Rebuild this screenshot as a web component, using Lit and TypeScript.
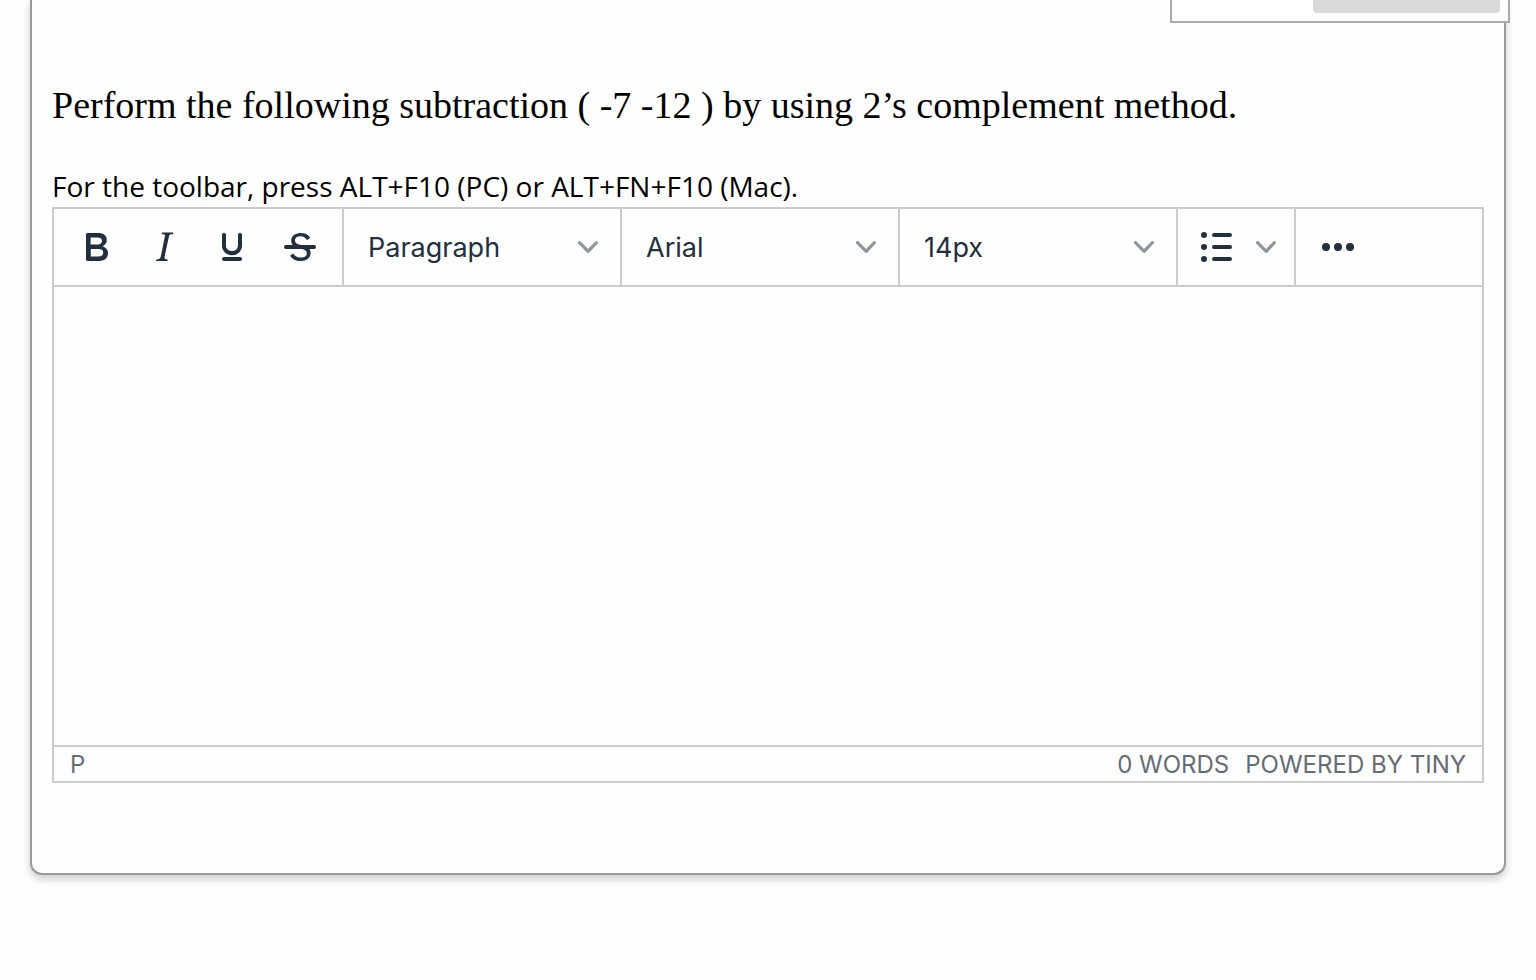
import { LitElement, html, css, svg } from "lit";
import { customElement, property } from "lit/decorators.js";

const ICONS = {
  bold: svg`<path fill-rule="evenodd" d="M7.8 19c-.3 0-.5 0-.6-.2l-.2-.5V5.7c0-.2 0-.4.2-.5l.6-.2h5c1.5 0 2.7.3 3.5 1 .7.6 1.1 1.4 1.1 2.5a3 3 0 0 1-.6 1.9c-.4.6-1 1-1.6 1.2.4.1.9.3 1.3.6s.8.7 1 1.2c.4.4.5 1 .5 1.6 0 1.3-.4 2.3-1.3 3-.8.7-2.1 1-3.8 1H7.8Zm5-8.3c.6 0 1.2-.1 1.6-.5.4-.3.6-.7.6-1.3 0-1.1-.8-1.7-2.3-1.7H9.3v3.5h3.4Zm.5 6c.7 0 1.3-.1 1.7-.4.4-.4.6-.9.6-1.5s-.2-1-.7-1.4c-.4-.3-1-.4-2-.4H9.4v3.8h4Z"/>`,
  italic: svg`<path fill-rule="evenodd" d="m16.7 4.7-.1.9h-.3c-.6 0-1 0-1.4.3-.3.3-.4.6-.5 1.1l-2.1 9.8v.6c0 .5.4.8 1.4.8h.2l-.2.8H8l.2-.8h.2c1.1 0 1.8-.5 2-1.5l2-9.8.1-.5c0-.6-.4-.8-1.4-.8h-.3l.2-.9h5.8Z"/>`,
  underline: svg`<path fill-rule="evenodd" d="M16 5c.6 0 1 .4 1 1v5.5a4 4 0 0 1-.4 1.8l-1 1.4a5.3 5.3 0 0 1-5.5 1 5 5 0 0 1-1.6-1c-.5-.4-.8-.9-1.1-1.4a4 4 0 0 1-.4-1.8V6c0-.6.4-1 1-1s1 .4 1 1v5.5c0 .3 0 .6.2 1l.6.7a3.3 3.3 0 0 0 2.2.8 3.4 3.4 0 0 0 2.2-.8c.3-.2.4-.4.5-.8l.3-.9V6c0-.6.4-1 1-1ZM8 17h8c.6 0 1 .4 1 1s-.4 1-1 1H8a1 1 0 0 1 0-2Z"/>`,
  strike: svg`<path fill-rule="evenodd" d="M15.6 8.5c-.5-.7-1-1.1-1.3-1.3-.6-.4-1.3-.6-2-.6-2.7 0-2.8 1.7-2.8 2.1 0 1.6 1.8 2 3.2 2.3 4.4.9 4.6 2.8 4.6 3.9 0 1.4-.7 4.1-5 4.1A6.2 6.2 0 0 1 7 16.4l1.5-1.1c.4.6 1.6 2 3.7 2 1.6 0 2.5-.4 3-1.2.4-.8.3-2-.8-2.6-.7-.4-1.6-.7-2.9-1-1-.2-3.9-.8-3.9-3.6C7.6 6 10.3 5 12.4 5c2.9 0 4.2 1.6 4.7 2.4l-1.5 1.1Z"/><path d="M5 11h14a1 1 0 0 1 0 2H5a1 1 0 0 1 0-2Z"/>`,
  bullets: svg`<path d="M11 5h8a1 1 0 0 1 0 2h-8a1 1 0 0 1 0-2Zm0 6h8a1 1 0 0 1 0 2h-8a1 1 0 0 1 0-2Zm0 6h8a1 1 0 0 1 0 2h-8a1 1 0 0 1 0-2Z"/><circle cx="6" cy="6" r="1.5"/><circle cx="6" cy="12" r="1.5"/><circle cx="6" cy="18" r="1.5"/>`,
  more: svg`<circle cx="6" cy="12" r="2"/><circle cx="12" cy="12" r="2"/><circle cx="18" cy="12" r="2"/>`,
};

const icon = (name: keyof typeof ICONS) =>
  html`<svg class="icon" viewBox="0 0 24 24" aria-hidden="true">${ICONS[name]}</svg>`;

const chevron = html`<svg class="chevron" viewBox="0 0 10 10" aria-hidden="true">
  <path d="M8.7 2.2c.3-.3.8-.3 1 0 .4.4.4.9 0 1.2L5.7 7.8c-.3.3-.9.3-1.2 0L.2 3.4a.8.8 0 0 1 0-1.2c.3-.3.8-.3 1.1 0L5 6l3.7-3.8Z"/>
</svg>`;

@customElement("rich-editor")
class RichEditor extends LitElement {
  @property({ type: Number }) words = 0;

  static styles = css`
    :host {
      display: flex;
      flex-direction: column;
      border: 2px solid #ccc;
      color: #222f3e;
      font-family: Inter, "Liberation Sans", sans-serif;
    }
    .toolbar {
      display: flex;
      height: 76px;
      border-bottom: 2px solid #ccc;
    }
    .group {
      display: flex;
      align-items: center;
      padding: 0 8px;
    }
    .group + .group {
      border-left: 2px solid #ccc;
    }
    .tool {
      display: flex;
      align-items: center;
      justify-content: center;
      width: 68px;
      height: 68px;
      padding: 0;
      border: 0;
      border-radius: 6px;
      background: none;
      color: inherit;
    }
    .tool.wide {
      width: 60px;
    }
    .tool.narrow {
      width: 40px;
    }
    .icon {
      width: 48px;
      height: 48px;
      fill: currentColor;
    }
    .chevron {
      width: 20px;
      height: 20px;
      fill: #222f3e;
      opacity: 0.5;
      pointer-events: none;
    }
    .picker {
      display: grid;
      grid-template-columns: 1fr 20px 14px;
      align-items: center;
      width: 260px;
      height: 68px;
    }
    .select {
      grid-area: 1 / 1 / 2 / 4;
      appearance: none;
      box-sizing: border-box;
      width: 100%;
      height: 68px;
      margin: 0;
      padding: 2px 48px 0 16px;
      border: 0;
      border-radius: 6px;
      background: transparent;
      color: inherit;
      font: 400 27px/34px Inter, "Liberation Sans", sans-serif;
    }
    .picker .chevron {
      grid-area: 1 / 2 / 2 / 3;
    }
    .content {
      display: block;
      box-sizing: border-box;
      width: 100%;
      height: 458px;
      padding: 16px;
      border: 0;
      outline: 0;
      resize: none;
      background: none;
      font: 28px/38px "Liberation Sans", sans-serif;
    }
    .status {
      display: flex;
      align-items: center;
      gap: 16px;
      height: 32px;
      padding: 2px 16px 0;
      border-top: 2px solid #ccc;
      color: #666c74;
      font-size: 24px;
      line-height: 32px;
      text-transform: uppercase;
    }
    .path {
      flex: 1;
    }
    .plain {
      padding: 0;
      border: 0;
      background: none;
      color: inherit;
      font: inherit;
      text-transform: inherit;
      text-decoration: none;
    }
  `;

  private picker(label: string, options: string[]) {
    return html`<div class="group">
      <div class="picker">
        <select class="select" aria-label=${label}>
          ${options.map((o) => html`<option>${o}</option>`)}
        </select>
        ${chevron}
      </div>
    </div>`;
  }

  render() {
    return html`
      <div class="toolbar" role="toolbar" aria-label="Formatting">
        <div class="group">
          <button class="tool" aria-label="Bold">${icon("bold")}</button>
          <button class="tool" aria-label="Italic">${icon("italic")}</button>
          <button class="tool" aria-label="Underline">${icon("underline")}</button>
          <button class="tool" aria-label="Strikethrough">${icon("strike")}</button>
        </div>
        ${this.picker("Block", ["Paragraph"])}
        ${this.picker("Font", ["Arial"])}
        ${this.picker("Font size", ["14px"])}
        <div class="group">
          <button class="tool wide" aria-label="Bullet list">${icon("bullets")}</button>
          <button class="tool narrow" aria-label="Bullet list styles">${chevron}</button>
        </div>
        <div class="group">
          <button class="tool" aria-label="More">${icon("more")}</button>
        </div>
      </div>
      <textarea class="content" aria-label="Answer"></textarea>
      <div class="status">
        <div class="path"><button class="plain">p</button></div>
        <button class="plain">${this.words} words</button>
        <a class="plain" href="#">Powered by Tiny</a>
      </div>
    `;
  }
}

@customElement("app-root")
class AppRoot extends LitElement {
  static styles = css`
    :host {
      display: block;
      position: relative;
      min-height: 100vh;
      background: #fefefe;
      color: #000;
    }
    .card {
      margin: 0 30px;
      padding: 80px 20px 90px;
      border: 2px solid #999;
      border-top: 0;
      border-radius: 0 0 12px 12px;
      background: #fefefe;
      box-shadow: 0 4px 8px rgba(0, 0, 0, 0.2);
    }
    .question {
      margin: 0 0 38px;
      font: 400 38px/50px "Liberation Serif", serif;
    }
    .hint {
      margin: 0;
      padding-bottom: 2px;
      font: 400 28px/37px "Open Sans", "Noto Sans", sans-serif;
    }
    .panel {
      position: absolute;
      top: 0;
      right: 26px;
      display: flex;
      justify-content: flex-end;
      box-sizing: border-box;
      width: 340px;
      padding: 0 8px 8px;
      border: 2px solid #aaa;
      border-top: 0;
      background: #fff;
    }
    .block {
      width: 187px;
      height: 13px;
      border-radius: 0 0 4px 4px;
      background: #d9d9d9;
    }
  `;

  render() {
    return html`
      <main class="card">
        <p class="question">Perform the following subtraction ( -7 -12 ) by using 2’s complement method.</p>
        <p class="hint">For the toolbar, press ALT+F10 (PC) or ALT+FN+F10 (Mac).</p>
        <rich-editor .words=${0}></rich-editor>
      </main>
      <aside class="panel"><div class="block"></div></aside>
    `;
  }
}
